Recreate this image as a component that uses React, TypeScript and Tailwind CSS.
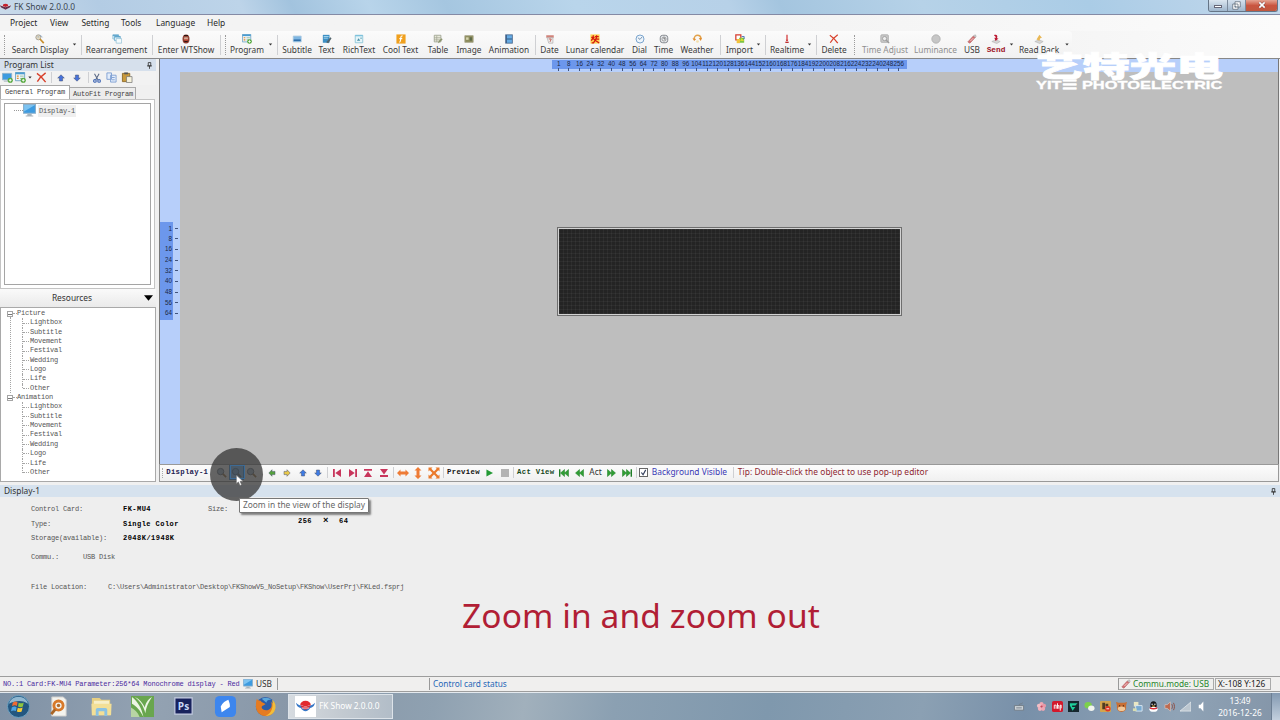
import React from "react";

type IconProps = { className?: string };

const Svg = ({
  children,
  className = "w-[10px] h-[10px]",
}: {
  children: React.ReactNode;
  className?: string;
}) => (
  <svg viewBox="0 0 12 12" className={`${className} shrink-0`} fill="none">
    {children}
  </svg>
);

/* ---------- toolbar icons ---------- */

const SearchIcon = () => (
  <Svg>
    <circle cx="4" cy="4" r="3" fill="#e3d9c0" stroke="#9d9a92" />
    <path d="M6 6l4.5 5" stroke="#c9902e" strokeWidth="2" />
    <path d="M3 3.5h2M6 1l3 3" stroke="#8aa6c4" />
  </Svg>
);
const WindowsIcon = () => (
  <Svg>
    <path d="M1 1h7v5H1z" fill="#d5ecf6" stroke="#76b4cf" strokeWidth=".8" />
    <path d="M3 3h7v5H3z" fill="#e4f4fa" stroke="#5ba3c8" strokeWidth=".8" />
    <path d="M5 5.500h6.500v5.500H5z" fill="#f4fbfd" stroke="#8bbbd0" strokeWidth=".8" />
    <path d="M1 1.500h7M3 3.500h7" stroke="#4a98c4" strokeWidth="1.200" />
  </Svg>
);
const MascotIcon = () => (
  <Svg>
    <ellipse cx="6" cy="6" rx="4.200" ry="5.500" fill="#8e3a2c" />
    <path d="M3.500 3.500h5v3h-5z" fill="#e8b39c" />
    <path d="M4 9h4M3.500 1.800h5" stroke="#2b1512" strokeWidth="1.300" />
    <path d="M4.200 4.500h1M6.800 4.500h1" stroke="#2b1512" />
    <path d="M4.500 7.300h3" stroke="#f04b36" />
  </Svg>
);
const ProgramIcon = ({ className }: IconProps) => (
  <Svg className={className}>
    <path d="M.5.500h10v9H.5z" fill="#eef4f7" stroke="#6ca2c4" />
    <path d="M.5 1.500h10" stroke="#4b9cd0" strokeWidth="2" />
    <path d="M2 4.500h2M2 7h2" stroke="#e28a2f" strokeWidth="1.400" />
    <path d="M5.500 4.500h4M5.500 7h3" stroke="#8eb9a0" />
    <circle cx="9" cy="9" r="2.800" fill="#54a83b" />
    <path d="M9 7.500v3M7.500 9h3" stroke="#fff" />
  </Svg>
);
const SubtitleIcon = () => (
  <Svg>
    <path d="M1.500 2.500h9.500v7H1.500z" fill="#7eb6e2" stroke="#a7c7df" />
    <path d="M2 6.500h8.500v2H2z" fill="#2f6fa9" />
  </Svg>
);
const TextIcon = () => (
  <Svg>
    <path d="M1 1h8v9.500H1z" fill="#3c8fc4" />
    <path d="M2 3h6M2 5h5" stroke="#b5dff2" />
    <path d="M5 10l5-6 1.500 1-4 6z" fill="#54656c" />
  </Svg>
);
const RichTextIcon = () => (
  <Svg>
    <path d="M1.500 1.500h9v9h-9z" fill="#e5f5f9" stroke="#86c3d6" />
    <path d="M1.500 2h9" stroke="#7cc1dd" strokeWidth="1.500" />
    <path d="M3.500 8l2-3 2 3z" fill="#4b8fa6" />
    <path d="M7.500 5h2" stroke="#4b8fa6" />
  </Svg>
);
const CoolTextIcon = () => (
  <Svg>
    <path d="M.5.500h11v11H.5z" fill="#f0a01e" />
    <path d="M8 2.500c-2-.7-2.200 1-2.400 3.500S5 10 3.800 9.500M4 5.500h3.500" stroke="#fff" strokeWidth="1.300" />
  </Svg>
);
const TableIcon = () => (
  <Svg>
    <path d="M1.500 1.500h8v8h-8z" fill="#e9eadb" stroke="#9ba08e" />
    <path d="M1.500 4.500h8M1.500 7h8M4.500 2v7.500" stroke="#9ba08e" strokeWidth=".8" />
    <path d="M6 11l1-3 3.500-3 1 1.500L8 10z" fill="#8a936d" />
  </Svg>
);
const ImageIcon = () => (
  <Svg>
    <path d="M1 2h10v8H1z" fill="#8c8b5b" stroke="#a7a68a" />
    <path d="M2.500 4h3v3h-3z" fill="#d6d6b0" />
    <path d="M7 4h2.500v4H7z" fill="#5c6a49" />
  </Svg>
);
const AnimationIcon = () => (
  <Svg>
    <path d="M1.500.500h9v11h-9z" fill="#3c5f89" />
    <path d="M3.500 1.500h6v9h-6z" fill="#66abe4" />
    <path d="M3.500 6h6" stroke="#25496e" />
  </Svg>
);
const DateIcon = () => (
  <Svg>
    <path d="M1.500 1.500h9v3h-9z" fill="#d08279" />
    <path d="M2.500 4.500h7v6.500h-5z" fill="#f0eeee" stroke="#aaa" strokeWidth=".8" />
    <path d="M4.500 6h3L6 9.500" stroke="#bb5046" />
  </Svg>
);
const LunarIcon = () => (
  <Svg>
    <path d="M.5.500h11v11H.5z" fill="#ffd34f" />
    <path
      d="M1.500 4h4M4 1.500L3.500 5 1.500 8M3.500 5L7 8M6 3h4.500M8 1.500L7.500 5.500M6 6h5M6.500 7L4 11M7 8l4 2.800M2 10.500h3"
      stroke="#d5180e"
      strokeWidth="1.500"
    />
  </Svg>
);
const DialIcon = () => (
  <Svg>
    <circle cx="6" cy="6" r="4.800" fill="#eef5fb" stroke="#7ba5ce" strokeWidth="1.200" />
    <path d="M3.500 4.500L6 6.500 8.500 3.500" stroke="#56779c" strokeWidth=".9" />
  </Svg>
);
const TimeIcon = () => (
  <Svg>
    <rect x="1.500" y="1.500" width="9" height="9" rx="3" fill="#e8ebee" stroke="#85898f" strokeWidth="1.200" />
    <circle cx="6" cy="6" r="2.500" stroke="#888" strokeWidth=".9" />
    <path d="M6 4v2h1.500" stroke="#555" strokeWidth=".9" />
  </Svg>
);
const WeatherIcon = () => (
  <Svg className="w-[11px] h-[10px]">
    <path d="M2 6c0-3 2-4.500 4-4.500S10 3 10 5.500" stroke="#e2a24b" strokeWidth="1.800" />
    <path d="M0 5l2 3.500 2.500-2.500zM7.500 5l4-.5-1.500 4z" fill="#e28e31" />
    <circle cx="6" cy="9" r="1.600" fill="#f4dfae" />
  </Svg>
);
const ImportIcon = () => (
  <Svg>
    <path d="M1 1h6v6H1z" fill="#fff" stroke="#d63c2f" strokeWidth="1.500" />
    <path d="M5 4.500h6v6H5z" fill="#7dc343" />
    <path d="M6 8l2-3 3 3.500z" fill="#e4de30" />
    <path d="M2 6h4v5H2z" fill="#f0c33d" />
    <path d="M8 3h3v3" stroke="#3965b3" />
  </Svg>
);
const RealtimeIcon = () => (
  <Svg>
    <path d="M6 1v7" stroke="#d0292a" strokeWidth="1.400" />
    <path d="M4 10h4" stroke="#bb2e2e" strokeWidth="1.600" />
    <path d="M4.500 7L6 9l1.500-2" fill="#d0292a" />
  </Svg>
);
const DeleteIcon = ({ className }: IconProps) => (
  <Svg className={className}>
    <path d="M1 1.500c4 2.500 7 6 9.500 9.500M10.500 1C7 3.500 3.500 7 1.500 10.500" stroke="#d8402b" strokeWidth="1.500" />
  </Svg>
);
const AdjustIcon = () => (
  <Svg>
    <rect x="1" y="1" width="9" height="9" rx="1" fill="#c9c9c9" stroke="#aaa" />
    <circle cx="5.500" cy="5.500" r="2.500" fill="#eee" stroke="#999" />
    <path d="M7.500 7.500l3.500 3.500" stroke="#999" strokeWidth="1.500" />
  </Svg>
);
const LuminanceIcon = () => (
  <Svg>
    <circle cx="6" cy="6" r="5" fill="#c6c6c6" stroke="#aeaeae" />
  </Svg>
);
const UsbIcon = () => (
  <Svg>
    <path d="M1 9.500L7.500 2.500l2.500 1.500-6.500 7z" fill="#d46d6f" stroke="#b5696a" strokeWidth=".8" />
    <path d="M8 2l2-1 1 2-1.500 1z" fill="#ddd" stroke="#999" strokeWidth=".7" />
    <path d="M4 8.500L7.500 5" stroke="#fff" strokeWidth=".8" />
  </Svg>
);
const SendIcon = () => (
  <Svg>
    <path d="M1 9l5-2 5 2-4 2.500z" fill="#d5d5d5" stroke="#aaa" strokeWidth=".6" />
    <path d="M3.500 1.500C6 0 9 2 7 5l2 .5-3.500 3L4 4.500l1.500.3C6 3.500 5 2.500 3.500 1.500z" fill="#bb1630" />
  </Svg>
);
const ReadIcon = () => (
  <Svg>
    <path d="M1 9l5-2 5 2-4 2.500z" fill="#d5d5d5" stroke="#aaa" strokeWidth=".6" />
    <path d="M3 6.500L6.500 1l3 3.500-2 .5-1 3z" fill="#e9b856" />
  </Svg>
);

const Sep = ({ className = "w-2" }: IconProps) => (
  <div className={`${className} h-5 flex justify-center shrink-0`}>
    <div className="w-px h-full bg-[#cfd0d3]" />
  </div>
);
const Grip = () => (
  <div className="w-px h-[20px] border-l border-dotted border-[#9b9b9b] shrink-0" />
);
const Caret = ({ className = "w-[5px]" }: IconProps) => (
  <svg viewBox="0 0 5 5" className={`${className} h-[5px] shrink-0`}>
    <path d="M.8 1.500h3.400L2.500 3.600z" fill="#333" />
  </svg>
);

const Tool = ({
  label,
  icon,
  w,
  text = "text-[#3a3a3a]",
}: {
  label: string;
  icon: React.ReactNode;
  w: string;
  text?: string;
}) => (
  <div className={`${w} shrink-0 h-full flex flex-col items-center pt-[3px]`}>
    {icon}
    <span className={`${text} leading-[12px] whitespace-nowrap`}>{label}</span>
  </div>
);

const MainToolbar = () => (
  <div className="h-[27px] w-[1072px] flex items-center bg-gradient-to-b from-[#fbfbfb] to-[#f1f1f1] rounded-r text-[8.3px]">
    <div className="w-[8px] pl-[4px] shrink-0">
      <Grip />
    </div>
    <Tool label="Search Display" icon={<SearchIcon />} w="w-[64px]" />
    <Caret />
    <Sep />
    <Tool label="Rearrangement" icon={<WindowsIcon />} w="w-[63px]" />
    <Sep className="w-[9px]" />
    <Tool label="Enter WTShow" icon={<MascotIcon />} w="w-[58px]" />
    <Sep className="w-[10px]" />
    <Grip />
    <Tool label="Program" icon={<ProgramIcon className="w-[10px] h-[10px]" />} w="w-[42px]" />
    <Caret />
    <Sep className="w-[9px]" />
    <Tool label="Subtitle" icon={<SubtitleIcon />} w="w-[30px]" />
    <Tool label="Text" icon={<TextIcon />} w="w-[29px]" />
    <Tool label="RichText" icon={<RichTextIcon />} w="w-[36px]" />
    <Tool label="Cool Text" icon={<CoolTextIcon />} w="w-[47px]" />
    <Tool label="Table" icon={<TableIcon />} w="w-[28px]" />
    <Tool label="Image" icon={<ImageIcon />} w="w-[34px]" />
    <Tool label="Animation" icon={<AnimationIcon />} w="w-[46px]" />
    <Sep className="w-[7px]" />
    <Tool label="Date" icon={<DateIcon />} w="w-[21px]" />
    <Tool label="Lunar calendar" icon={<LunarIcon />} w="w-[70px]" />
    <Tool label="Dial" icon={<DialIcon />} w="w-[19px]" />
    <Tool label="Time" icon={<TimeIcon />} w="w-[29px]" />
    <Tool label="Weather" icon={<WeatherIcon />} w="w-[38px]" />
    <Sep className="w-[9px]" />
    <Tool label="Import" icon={<ImportIcon />} w="w-[29px]" />
    <Caret className="w-[9px]" />
    <Sep className="w-[5px]" />
    <Tool label="Realtime" icon={<RealtimeIcon />} w="w-[38px]" />
    <Caret className="w-[7px]" />
    <Sep className="w-[7px]" />
    <Tool label="Delete" icon={<DeleteIcon className="w-[10px] h-[10px]" />} w="w-[28px]" />
    <div className="w-[12px] flex justify-center shrink-0">
      <Grip />
    </div>
    <Tool label="Time Adjust" icon={<AdjustIcon />} w="w-[50px]" text="text-[#8e8e8e]" />
    <Tool label="Luminance" icon={<LuminanceIcon />} w="w-[51px]" text="text-[#8e8e8e]" />
    <Tool label="USB" icon={<UsbIcon />} w="w-[22px]" />
    <Tool
      label="Send"
      icon={<SendIcon />}
      w="w-[26px]"
      text="text-[#9c1024] font-bold font-['Liberation_Mono'] text-[7.8px]"
    />
    <Caret />
    <Tool label="Read Back" icon={<ReadIcon />} w="w-[50px]" />
    <Caret className="w-[6px]" />
  </div>
);

/* ---------- left side ---------- */

const PinIcon = () => (
  <svg viewBox="0 0 6 8" className="w-[5px] h-[7px]" fill="none" stroke="#333">
    <path d="M1.500.500h3v4h-3zM0 4.500h6M3 4.500v3.500" />
  </svg>
);

const ScreenIcon = ({ className }: IconProps) => (
  <Svg className={className}>
    <path d="M.5.500h11v8H.5z" fill="#3d9be0" stroke="#8ab0cc" />
    <path d="M1 1h10L1 7z" fill="#7dc3f1" />
    <path d="M4 9h4v1.500h1.500v1h-7v-1H4z" fill="#a9b4bb" />
  </Svg>
);

const Arrow = ({ turn = "", color }: { turn?: string; color: string }) => (
  <svg viewBox="0 0 8 8" className={`w-[8px] h-[8px] shrink-0 ${turn}`}>
    <path d="M4 .8l3.300 3.200H5.600v3H2.400V4H.7z" fill={color} stroke="#47506b" strokeWidth=".5" />
  </svg>
);

const ListToolbar = () => (
  <div className="h-[14px] flex items-center pl-[2px] pb-px bg-[#f2f2f2]">
    <div className="w-[13px]">
      <Svg className="w-[11px] h-[11px]">
        <path d="M.5 1.500h10v7H.5z" fill="#3d9be0" stroke="#8ab0cc" />
        <path d="M2 10h6" stroke="#a5b1ba" />
        <circle cx="9" cy="9" r="2.800" fill="#54a83b" />
        <path d="M9 7.500v3M7.500 9h3" stroke="#fff" />
      </Svg>
    </div>
    <ProgramIcon className="w-[11px] h-[11px]" />
    <Caret className="w-[8px]" />
    <DeleteIcon className="w-[11px] h-[11px] ml-[2px]" />
    <Sep className="w-[5px] ml-[2px] max-h-[11px]" />
    <div className="flex gap-[8px] ml-[3px]">
      <Arrow color="#4772db" />
      <Arrow color="#4772db" turn="rotate-180" />
    </div>
    <Sep className="w-[6px] ml-[4px] max-h-[11px]" />
    <Svg className="w-[10px] h-[10px] ml-px">
      <path d="M3 1l4 7M8.500 1l-4 7" stroke="#5b6a86" strokeWidth="1.300" />
      <circle cx="3.500" cy="9.500" r="1.600" stroke="#3f66b3" strokeWidth="1.300" />
      <circle cx="8.500" cy="9.500" r="1.600" stroke="#3f66b3" strokeWidth="1.300" />
    </Svg>
    <Svg className="w-[11px] h-[11px] ml-[4px]">
      <path d="M1 1h5v7H1zM5 3.500h6v7.500H5z" fill="#e3edfb" stroke="#7fa0d2" />
      <path d="M6.500 6h3M6.500 8.500h3" stroke="#7fa0d2" />
    </Svg>
    <Svg className="w-[12px] h-[11px] ml-[4px]">
      <path d="M1 1.500h8v9H1z" fill="#c99a3c" stroke="#8c6b2b" />
      <path d="M3 .5h4v2H3z" fill="#555" />
      <path d="M5.500 5h6v6.500h-6z" fill="#f6f2dc" stroke="#777" strokeWidth=".8" />
    </Svg>
  </div>
);

const RESOURCES = [
  "Lightbox",
  "Subtitle",
  "Movement",
  "Festival",
  "Wedding",
  "Logo",
  "Life",
  "Other",
];

const ResourceGroup = ({ name, last = false }: { name: string; last?: boolean }) => (
  <div className="flex">
    <div className="w-[6px] flex flex-col items-center shrink-0">
      <div className="mt-[2px] w-[6px] h-[6px] border border-[#a5a5a5] bg-white flex items-center">
        <div className="w-full h-px bg-[#777]" />
      </div>
      {!last && <div className="flex-1 border-l border-dotted border-[#a5a5a5]" />}
    </div>
    <div>
      <div className="h-[9.350px] leading-[9.350px] flex items-center">
        <div className="w-[4px] border-t border-dotted border-[#a5a5a5]" />
        {name}
      </div>
      {RESOURCES.map((item, index) => (
        <div key={item} className="h-[9.350px] leading-[9.350px] flex items-center pl-[9px]">
          <div className="h-full w-px">
            <div
              className={`${index === 7 ? "h-1/2" : "h-full"} border-l border-dotted border-[#a5a5a5]`}
            />
          </div>
          <div className="w-[6px] mr-px border-t border-dotted border-[#a5a5a5]" />
          {item}
        </div>
      ))}
    </div>
  </div>
);

const SidePanel = () => (
  <div className="w-[156px] shrink-0 flex flex-col">
    <div className="h-[12px] bg-[#d6e0ec] flex items-center justify-between pl-[4px] pr-[4px] text-[8.300px] text-[#333]">
      <span>Program List</span>
      <PinIcon />
    </div>
    <ListToolbar />
    <div className="h-[14px] flex items-end font-['Liberation_Mono','DejaVu_Sans_Mono',monospace] text-[7px] tracking-[-0.200px] text-[#444]">
      <div className="h-[14px] w-[70px] bg-white border border-b-0 border-[#a9a9a9] pl-[4px] leading-[12px] whitespace-nowrap">
        General Program
      </div>
      <div className="h-[12px] w-[66px] bg-[#ececec] border border-l-0 border-b-0 border-[#a9a9a9] pl-[3px] leading-[12px] whitespace-nowrap">
        AutoFit Program
      </div>
    </div>
    <div className="h-[190px] w-[155px] bg-white border border-[#c4c4c4] p-[3px]">
      <div className="h-full border border-[#a5a5a5] pl-[9px] flex items-start font-['Liberation_Mono',monospace] text-[7px] tracking-[-0.200px] text-[#555]">
        <div className="w-[9px] mt-[6px] border-t border-dotted border-[#999]" />
        <ScreenIcon className="w-[13px] h-[13px]" />
        <span className="ml-[2px] mt-px px-[1px] bg-[#efefef] leading-[12px]">Display-1</span>
      </div>
    </div>
    <div className="h-[18px] flex items-center bg-gradient-to-b from-[#fafafa] to-[#eaeaea] text-[8.400px] text-[#333]">
      <span className="flex-1 text-center pt-px">Resources</span>
      <svg viewBox="0 0 10 6" className="w-[9px] h-[6px] mr-[3px]">
        <path d="M0 0h10L5 6z" fill="#000" />
      </svg>
    </div>
    <div className="h-[175px] bg-white border border-[#a9a9a9] pl-[6px] pt-px font-['Liberation_Mono',monospace] text-[7px] tracking-[-0.200px] text-[#555]">
      <ResourceGroup name="Picture" />
      <ResourceGroup name="Animation" last />
    </div>
  </div>
);

/* ---------- canvas ---------- */

const COLS = Array.from({ length: 33 }, (_, i) => (i === 0 ? 1 : i * 8));
const ROWS = [1, 8, 16, 24, 32, 40, 48, 56, 64];

const Canvas = () => (
  <div className="h-[405px] flex flex-col bg-[#bebebe] border-l border-r border-[#777] font-['Liberation_Sans',sans-serif] text-[6.300px] text-[#1b2742]">
    <div className="h-[13px] shrink-0 bg-[#b7cffa] pl-[392px] pt-px">
      <div className="w-[355px] h-[9px] bg-[#6c97ec] flex pl-[2px]">
        {COLS.map((n) => (
          <div
            key={n}
            className={`${n === 1 ? "w-[9.500px]" : "w-[10.650px]"} shrink-0 flex flex-col items-center`}
          >
            <span className="leading-[8px] h-[8px]">{n}</span>
            <div className="w-px h-[3px] bg-[#41547d] shrink-0" />
          </div>
        ))}
      </div>
    </div>
    <div className="flex-1 flex">
      <div className="w-[19.500px] bg-[#b7cffa] pt-[150px] shrink-0">
        <div className="w-[13px] h-[98px] bg-[#6c97ec] pt-[2px]">
          {ROWS.map((n) => (
            <div
              key={n}
              className={`${n === 1 ? "h-[9.500px]" : "h-[10.650px]"} w-[18px] flex items-center`}
            >
              <span className="w-[12px] text-right leading-[8px]">{n}</span>
              <div className="ml-[3px] w-[3px] h-px bg-[#41547d]" />
            </div>
          ))}
        </div>
      </div>
      <div className="pl-[377.500px] pt-[155px]">
        <div className="w-[345px] h-[89px] border border-[#6e6e6e] bg-[#d2d2d2] p-px">
          <div className="w-full h-full bg-[#242424] bg-[linear-gradient(#ffffff0b_1px,transparent_1px),linear-gradient(90deg,#ffffff0b_1px,transparent_1px)] bg-[size:4px_4px]" />
        </div>
      </div>
    </div>
  </div>
);

const Magnifier = () => (
  <Svg className="w-[11px] h-[11px]">
    <circle cx="5" cy="5" r="3.500" fill="#a8bccd" stroke="#6a7580" />
    <path d="M7.500 7.500l3.500 3.500" stroke="#9b7a49" strokeWidth="1.800" />
  </Svg>
);

const Align = ({ turn = "" }: { turn?: string }) => (
  <svg viewBox="0 0 8 8" className={`w-[8px] h-[8px] ${turn}`}>
    <path d="M0 0h1.800v8H0zM8 0v8L2.300 4z" fill="#c8365c" />
  </svg>
);

const Spread = ({ turn = "" }: { turn?: string }) => (
  <svg viewBox="0 0 12 8" className={`w-[12px] h-[8px] ${turn}`}>
    <path d="M0 4l3.500-3.500v2h5v-2L12 4 8.500 7.500v-2h-5v2z" fill="#ee7b35" />
  </svg>
);

const Skip = ({ turn = "", bar = false }: { turn?: string; bar?: boolean }) => (
  <svg viewBox="0 0 10 8" className={`w-[10px] h-[8px] ${turn}`}>
    <path d="M1.500 4L5.500.500v7zM5.500 4L9.500.500v7z" fill="#2f9e33" stroke="#1f7d27" strokeWidth=".5" />
    {bar && <path d="M0 .3h1.400v7.400H0z" fill="#1f7d27" />}
  </svg>
);

const Cell = ({ children, w = "w-[15.400px]" }: { children: React.ReactNode; w?: string }) => (
  <div className={`${w} h-full shrink-0 flex items-center justify-center`}>{children}</div>
);

const ViewToolbar = () => (
  <div className="relative h-[18px] flex items-center pb-px border border-[#999] bg-gradient-to-b from-[#fcfcfc] to-[#f0f0f0] text-[8.400px] text-[#333]">
    <div className="w-[6px] h-[10px] pl-[2px] shrink-0">
      <div className="h-full border-l border-dotted border-[#aaa]" />
    </div>
    <Cell w="w-[42.500px]">
      <span className="font-['Liberation_Mono'] font-bold text-[7.300px] tracking-[0.280px] text-[#1e2152]">
        Display-1
      </span>
    </Cell>
    <div className="w-[5px] shrink-0" />
    <Cell>
      <Magnifier />
    </Cell>
    <Cell>
      <div className="w-[15px] h-[15px] flex items-center justify-center border border-[#4f9ae0] bg-[#b9d9f5]">
        <Magnifier />
      </div>
    </Cell>
    <Cell>
      <Magnifier />
    </Cell>
    <div className="w-[4.500px] shrink-0" />
    <Cell>
      <Arrow color="#55a03d" turn="-rotate-90" />
    </Cell>
    <Cell>
      <Arrow color="#e9c84a" turn="rotate-90" />
    </Cell>
    <Cell>
      <Arrow color="#3e7be4" />
    </Cell>
    <Cell>
      <Arrow color="#3e7be4" turn="rotate-180" />
    </Cell>
    <Sep className="w-[4px] max-h-[11px]" />
    <Cell>
      <Align />
    </Cell>
    <Cell>
      <Align turn="rotate-180" />
    </Cell>
    <Cell>
      <Align turn="rotate-90" />
    </Cell>
    <Cell>
      <div className="border-b-2 border-[#c8365c] w-[8px] h-[8px] flex items-start justify-center">
        <svg viewBox="0 0 8 6" className="w-[8px] h-[6px]">
          <path d="M0 0h8L4 5.500z" fill="#c8365c" />
        </svg>
      </div>
    </Cell>
    <Sep className="w-[4px] max-h-[11px]" />
    <Cell>
      <Spread />
    </Cell>
    <Cell>
      <Spread turn="rotate-90" />
    </Cell>
    <Cell>
      <Svg className="w-[12px] h-[12px]">
        <path
          d="M.5.500h4L3.300 1.700 6 4.400l2.700-2.700L7.500.500h4v4l-1.200-1.200L7.600 6l2.700 2.700 1.200-1.200v4h-4l1.200-1.200L6 7.600l-2.700 2.700 1.200 1.200h-4v-4l1.200 1.200L4.400 6 1.700 3.300.500 4.500z"
          fill="#ea7a2c"
        />
      </Svg>
    </Cell>
    <Sep className="w-[4px] max-h-[11px]" />
    <Cell w="w-[36px]">
      <span className="font-['Liberation_Mono'] font-bold text-[7.300px] tracking-[0.300px] text-[#111]">
        Preview
      </span>
    </Cell>
    <Cell>
      <svg viewBox="0 0 8 8" className="w-[7px] h-[8px]">
        <path d="M.5 0L8 4 .5 8z" fill="#239a35" />
      </svg>
    </Cell>
    <Cell>
      <div className="w-[8px] h-[8px] bg-[#b3b3b3]" />
    </Cell>
    <Sep className="w-[3px] max-h-[11px]" />
    <Cell w="w-[41px]">
      <span className="font-['Liberation_Mono'] font-bold text-[7.300px] tracking-[0.300px] text-[#15471b] whitespace-nowrap">
        Act View
      </span>
    </Cell>
    <Cell>
      <Skip bar />
    </Cell>
    <Cell>
      <Skip />
    </Cell>
    <Cell w="w-[17px]">Act</Cell>
    <Cell>
      <Skip turn="rotate-180" />
    </Cell>
    <Cell>
      <Skip turn="rotate-180" bar />
    </Cell>
    <Sep className="w-[4px] max-h-[11px]" />
    <div className="w-[9px] h-[9px] border border-[#666] bg-white flex items-center justify-center shrink-0">
      <svg viewBox="0 0 8 8" className="w-[7px] h-[7px]" fill="none">
        <path d="M1.500 4l2 2.500L6.500 1" stroke="#333e5c" strokeWidth="1.300" />
      </svg>
    </div>
    <span className="w-[83px] pl-[4px] pb-px text-[#3a38b5] whitespace-nowrap shrink-0">Background Visible</span>
    <Sep className="w-[5px] max-h-[11px]" />
    <span className="pl-[2px] text-[#8d2631] tracking-[0.040px] whitespace-nowrap">
      Tip: Double-click the object to use pop-up editor
    </span>

    {/* click highlight, pointer and tooltip */}
    <div className="absolute left-[50px] top-[-17px] w-[53px] h-[53px] rounded-full bg-[#383838c4]" />
    <div className="absolute left-[70px] top-0 w-[15px] h-[14px] border border-[#3d6a94] bg-[#29507333]" />
    <svg viewBox="0 0 10 14" className="absolute left-[76px] top-[9px] w-[8px] h-[13px]">
      <path d="M.5.500v10.500l2.500-2.300 2 4.500 2-.9-2-4.300h3.800z" fill="#fff" stroke="#666" strokeWidth=".6" />
    </svg>
    <div className="absolute left-[79px] top-[33px] w-[130px] h-[15px] z-10 border border-[#777] rounded-[1px] bg-white shadow-[2px_2px_2px_#0007] text-center text-[8.400px] leading-[12px] text-[#666] whitespace-nowrap">
      Zoom in the view of the display
    </div>
  </div>
);

/* ---------- bottom ---------- */

const InfoPanel = () => (
  <div className="h-[179px] bg-[#eeeeee] pl-[31px] pt-[6px] font-['Liberation_Mono',monospace] text-[7px] tracking-[-0.200px] text-[#555] whitespace-pre">
    <div className="flex h-[12px] leading-[12px]">
      <span className="w-[92px]">Control Card:</span>
      <b className="w-[85px] text-black tracking-[0.460px]">FK-MU4</b>
      <span>Size:</span>
    </div>
    <div className="flex h-[17px] leading-[17px]">
      <span className="w-[92px] pt-[1px]">Type:</span>
      <b className="w-[175px] pt-[1px] text-black tracking-[0.460px]">Single Color</b>
      <b className="w-[25px] text-black tracking-[0.460px] leading-[13px]">256</b>
      <b className="w-[16px] text-black leading-[13px] text-[9px]">×</b>
      <b className="text-black tracking-[0.460px] leading-[13px]">64</b>
    </div>
    <div className="flex h-[12px] leading-[12px]">
      <span className="w-[92px]">Storage(available):</span>
      <b className="text-black tracking-[0.480px]">2048K/1948K</b>
    </div>
    <div className="flex h-[12px] leading-[12px] mt-[7px]">
      <span className="w-[52px]">Commu.:</span>
      <span>USB Disk</span>
    </div>
    <div className="flex h-[12px] leading-[13px] mt-[18px]">
      <span className="w-[77px]">File Location:</span>
      <span>{"C:\\Users\\Administrator\\Desktop\\FKShowV5_NoSetup\\FKShow\\UserPrj\\FKLed.fsprj"}</span>
    </div>
    <div className="pl-[431px] pt-[1px] font-['Noto_Sans',sans-serif] text-[33.500px] leading-[42px] tracking-[0.100px] text-[#b11e35]">
      Zoom in and zoom out
    </div>
  </div>
);

const StatusBar = () => (
  <div className="h-[16px] flex items-center bg-[#f0efee] border-y border-[#9d9d9d] text-[8.300px] whitespace-nowrap">
    <span className="w-[242px] pl-[3px] shrink-0 font-['Liberation_Mono'] text-[7px] tracking-[-0.190px] text-[#4a2aa0]">
      NO.:1 Card:FK-MU4 Parameter:256*64 Monochrome display - Red
    </span>
    <div className="w-[36px] h-[12px] shrink-0 border-r border-[#999] flex items-center gap-[3px] pl-px text-[#333]">
      <ScreenIcon className="w-[10px] h-[10px]" />
      USB
    </div>
    <div className="w-[152px] h-[12px] border-r border-[#999] shrink-0" />
    <span className="w-[689px] h-[12px] leading-[12px] pl-[3px] shrink-0 border-r border-[#999] text-[#2767b8]">
      Control card status
    </span>
    <div className="w-[95px] h-[12px] shrink-0 border border-l-0 border-[#aaa] flex items-center pl-[2px] gap-[2px] text-[#26862c]">
      <UsbIcon />
      Commu.mode: USB
    </div>
    <span className="w-[56px] h-[12px] leading-[10px] shrink-0 border border-[#aaa] ml-px pl-[2px] text-[#222]">
      X:-108 Y:126
    </span>
  </div>
);

const AppIcon = ({ children, w }: { children: React.ReactNode; w: string }) => (
  <div className={`${w} shrink-0 flex justify-center`}>
    <svg viewBox="0 0 24 24" className="w-[23px] h-[23px]" fill="none">
      {children}
    </svg>
  </div>
);

const LogoMark = ({ className }: IconProps) => (
  <svg viewBox="0 0 20 20" className={className}>
    <path d="M0 0h20v20H0z" fill="#fff" />
    <path d="M5 8.500a5 4 0 0 1 10 0l-5 1.500z" fill="#e22a2e" />
    <path d="M1 6.500c1.500 2 4 2.500 6 3l3 1.500 3-1.500c2-.5 4.500-1 6-3-.5 3.500-2.500 4.500-4.500 5-1.500 2-2.500 3-4.500 3s-3-1-4.500-3c-2-.5-4-1.500-4.500-5z" fill="#3778c8" />
    <path d="M5 8.800l5 1.400 5-1.400-2 3.200-3 1.200L7 12z" fill="#d92a33" />
    <path d="M6.500 11.500h7" stroke="#fff" strokeWidth=".7" />
  </svg>
);

const Tray = ({ children }: { children: React.ReactNode }) => (
  <div className="w-[16px] flex justify-center">
    <Svg className="w-[11px] h-[11px]">{children}</Svg>
  </div>
);

const Taskbar = () => (
  <div className="h-[28px] border-t border-[#e4e9ee] bg-[linear-gradient(100deg,#7f91a5_0%,#93a2b2_12%,#8796a7_24%,#8fa1b1_34%,#a1b0bc_41%,#8ba0b2_48%,#7f98ad_60%,#8ba0b3_72%,#7890a9_80%,#8fa3b6_92%,#8495a8_100%)] flex items-center font-['Noto_Sans'] text-[8.300px] text-white">
    <AppIcon w="w-[36px]">
      <circle cx="12" cy="12" r="11.500" fill="#235780" stroke="#6fa4c4" />
      <path d="M2 9a10.500 10.500 0 0 1 20 0C15 5 9 6 2 9z" fill="#91b8d0" />
      <path d="M6 8c2-1.500 3.500-1.500 5-.5l-.7 4c-1.500-1-3-1-5 .300z" fill="#ef6b31" />
      <path d="M12.200 8c2 1 3.500 1 5.300-.200l-1 4.200c-1.500 1-3 1-5 0z" fill="#8dc63f" />
      <path d="M5 13c2-1.300 3.500-1.200 5-.2l-.8 4c-1.500-1-3-1-5 .2z" fill="#4ba4e4" />
      <path d="M11.300 13.200c2 1 3.400 1 5-.1l-1 4c-1.500 1-3 1-5 0z" fill="#f9cb35" />
    </AppIcon>
    <AppIcon w="w-[44px]">
      <path d="M5 2h12l3 3v17H5z" fill="#f3f3ee" stroke="#c9c9c9" />
      <circle cx="12" cy="11" r="4.800" stroke="#d8792a" strokeWidth="3" />
      <circle cx="12" cy="11" r="1.800" fill="#b06c30" />
      <path d="M8.500 15l-4 5" stroke="#a96526" strokeWidth="3" />
    </AppIcon>
    <AppIcon w="w-[42px]">
      <path d="M2 3h8l2 2h9v16H2z" fill="#e7cf82" />
      <path d="M4 6h16v4H4z" fill="#f7efc8" />
      <path d="M1.500 9h21L22 21H2z" fill="#f3df96" />
      <path d="M6 22v-6.500q0-2 2-2h8q2 0 2 2V22h-3v-5H9v5z" fill="#8bc2e2" />
    </AppIcon>
    <AppIcon w="w-[40px]">
      <path d="M0 1h24v22H0z" fill="#69a64e" />
      <path d="M1 2c6 5 10 11 12 21-4-8-7-11-12-14zM4 2c6 5 9 9 11 17 1-7 3-11 7-17-5 3-7 7-7.500 11C12 8 9 4 4 2z" fill="#edf5e4" />
      <path d="M0 13c4 2 7 5 9 10H0z" fill="#b8d5a4" />
    </AppIcon>
    <AppIcon w="w-[43px]">
      <path d="M3 3h18v17H3z" fill="#18225d" stroke="#c7cfe4" strokeWidth="1.200" />
      <text x="12" y="15.500" textAnchor="middle" fontSize="10.500" fontWeight="bold" fontFamily="Open Sans" fill="#c9d7f7">
        Ps
      </text>
    </AppIcon>
    <AppIcon w="w-[40px]">
      <rect x="1" y="1" width="22" height="22" rx="5" fill="#3d86ee" />
      <path d="M8 18l-1-6c2-4 5-6 8-7 1 3 2 5 1.500 7.500z" fill="#fff" />
    </AppIcon>
    <AppIcon w="w-[41px]">
      <circle cx="12" cy="12" r="10" fill="#2c5ca8" />
      <path d="M8 4c4-2 8-1 10 1-3-.5-5 1-5 3z" fill="#5ca7da" />
      <path d="M3 4c1 1.500 2 2 4 2 1 2 3 2 5 3.500-1 1.500-4 1.500-4 3.500 1 3.500 7 4 9.500.500 1.500-2 1-5 0-6.500 3 2 4.500 4 4 7.500C20.500 20 16 22.500 11.500 22 5 21.500 1.500 16 2 11c.1-2 .2-5 1-7z" fill="#e57b22" />
      <path d="M19 5c4 3 4.500 9 2 12.500-2 3-6 4.500-9 4.500 6-3 8.500-8 7-17z" fill="#f3bd38" />
    </AppIcon>
    <div className="w-[105px] h-[25px] ml-[2px] border border-[#dde3e9] bg-gradient-to-r from-[#d6dbe0] via-[#c3cad1] to-[#b2bdc8] flex items-center pl-[6px] gap-[3px] shrink-0">
      <LogoMark className="w-[21px] h-[21px]" />
      <span className="whitespace-nowrap">FK Show 2.0.0.0</span>
    </div>

    <div className="flex-1" />
    <div className="flex items-center shrink-0">
      <div className="w-[20px] flex">
        <Svg className="w-[12px] h-[11px]">
          <path d="M1 5h10v5H1z" fill="#cdd3d8" stroke="#727c85" />
          <path d="M6 5c0-3 3-1 4-3M3 7.500h6" stroke="#727c85" />
        </Svg>
      </div>
      <Tray>
        <circle cx="6" cy="3.300" r="2.300" fill="#f0a8b4" />
        <circle cx="3.300" cy="5.300" r="2.300" fill="#f3bec6" />
        <circle cx="8.700" cy="5.300" r="2.300" fill="#e898a6" />
        <circle cx="4.300" cy="8.500" r="2.300" fill="#f3b2bd" />
        <circle cx="7.700" cy="8.500" r="2.300" fill="#efa6b3" />
        <circle cx="6" cy="6" r="1.200" fill="#cb4358" />
      </Tray>
      <Tray>
        <rect x="0" y="0" width="12" height="12" rx="2" fill="#d3182c" />
        <path d="M2.500 8.500V4.500h2v4M6 2.500v6M6 5h1.500v3.500M9 10.500v-6h1v3.500" stroke="#fff" />
      </Tray>
      <Tray>
        <path d="M0 0h12v12H0z" fill="#16272e" />
        <path d="M2 2.500h8.500L8 5H4.500v1.500H8L5 10.500 2 5z" fill="#1fcf9b" />
      </Tray>
      <Tray>
        <ellipse cx="4.500" cy="4.500" rx="4" ry="3.500" fill="#7cd04c" />
        <ellipse cx="8" cy="8" rx="3.500" ry="3" fill="#f0f3ee" />
      </Tray>
      <Tray>
        <rect x="0" y="0" width="12" height="12" rx="1" fill="#d3a54d" />
        <path d="M2.500 2h3v7h-3zM6 3h3v3H6z" fill="#503b22" />
        <circle cx="8.500" cy="8.500" r="3" fill="#dc3727" />
        <path d="M7 8.500h3" stroke="#fff" />
      </Tray>
      <Tray>
        <path d="M0 1l3 1h6l3-1-1 4v3c0 2-2 4-5 4S1 10 1 8V5z" fill="#c86f34" />
        <ellipse cx="6" cy="8.500" rx="4" ry="2.500" fill="#f1c797" />
        <path d="M4 4.500v1.500M8 4.500v1.500" stroke="#402010" />
      </Tray>
      <Tray>
        <path d="M2 1h5v5H2z" fill="#eae7c4" />
        <path d="M4 5h7v6H4z" fill="#77aad2" stroke="#dbe8f2" />
        <path d="M1 8h4v3H1z" fill="#d8ddb1" />
      </Tray>
      <Tray>
        <ellipse cx="6" cy="4.500" rx="3.500" ry="4.300" fill="#16181c" />
        <ellipse cx="6" cy="9" rx="4.500" ry="2.800" fill="#fff" />
        <path d="M2 6.500c2 1.500 6 1.500 8 0v2c-2 1-6 1-8 0z" fill="#da2c37" />
        <path d="M4.500 3v1M7.500 3v1" stroke="#fff" strokeWidth="1.500" />
        <path d="M4.500 5.500h3" stroke="#f3b22d" />
      </Tray>
      <Tray>
        <path d="M1 4h2.500L7 1v10L3.500 8H1z" fill="#bd6a50" stroke="#e6d5ce" strokeWidth=".6" />
        <path d="M8.500 3.500c1 1.500 1 3.500 0 5M10.300 2c1.500 2.500 1.500 5.500 0 8" stroke="#8e4c41" />
      </Tray>
      <Tray>
        <path d="M0 11L12 1v10z" fill="#bcc7d0" stroke="#e8edf0" strokeWidth=".8" />
      </Tray>
      <Tray>
        <path d="M3 4h2l3-3.500v11L5 8H3z" fill="#fff" />
      </Tray>
    </div>
    <div className="w-[62px] flex flex-col items-center leading-[12px] shrink-0 whitespace-nowrap">
      <span>13:49</span>
      <span>2016-12-26</span>
    </div>
    <div className="w-[9px] h-full border-l border-[#6c7f94] bg-gradient-to-b from-[#8399b1] to-[#c3d0de] shrink-0" />
  </div>
);

const TitleBar = () => (
  <div className="h-[15px] flex items-center justify-between border-b border-[#848aa5] bg-[linear-gradient(65deg,#c9daea_0%,#b3cce4_8%,#bdd4e9_19%,#a2c3de_23%,#b8d4ea_29%,#a5c6e0_35%,#b9d5eb_45%,#b7d1e8_57%,#a4c5df_61%,#b6d2e8_72%,#aacce6_85%,#c3d8ec_100%)] text-[8.400px] text-[#3b4652]">
    <div className="flex items-center">
      <svg viewBox="0 3 20 14" className="w-[11px] h-[8px]">
        <path d="M0 6l5 1 5-3 5 3 5-1-2 5-4 1-4 4-4-4-4-1z" fill="#f4f1f3" />
        <path d="M5 8a5 4 0 0 1 10 0l-5 2z" fill="#c5202c" />
        <path d="M0 7l6 2 4 1.500L14 9l6-2c-1 4-3 5-6 5.500l-4 2.500-4-2.500C3 12 1 11 0 7z" fill="#64324e" />
      </svg>
      <span className="ml-[3px]">FK Show 2.0.0.0</span>
    </div>
    <div className="h-[12px] mb-[3px] mr-[2px] flex border border-t-0 border-[#657587] rounded-b-[3px] overflow-hidden">
      <div className="w-[19px] bg-gradient-to-b from-[#dbe6f0] to-[#9fb6cd] border-r border-[#7b8a9c] flex items-end justify-center pb-[3px]">
        <div className="w-[8px] h-[3px] bg-white border border-[#667]" />
      </div>
      <div className="w-[18px] bg-gradient-to-b from-[#d5e1ed] to-[#9fb6cd] border-r border-[#7b8a9c] flex items-center justify-center">
        <Svg className="w-[9px] h-[9px]">
          <path d="M4 1h7v7H4zM1 4h7v7H1z" fill="#fff" stroke="#5c6877" />
          <path d="M3.500 6.500h2v2h-2z" fill="#6e8296" />
        </Svg>
      </div>
      <div className="w-[31px] bg-gradient-to-b from-[#e4a493] via-[#c95540] to-[#c1583f] flex items-center justify-center">
        <Svg className="w-[8px] h-[8px]">
          <path d="M2 2l8 8M10 2l-8 8" stroke="#704044" strokeWidth="3.800" />
          <path d="M2 2l8 8M10 2l-8 8" stroke="#fff" strokeWidth="2.500" />
        </Svg>
      </div>
    </div>
  </div>
);

const MenuBar = () => (
  <div className="h-[16px] flex items-center pl-[10px] text-[8.400px] text-[#2a2a2a] bg-gradient-to-r from-[#f3f3f3] from-60% to-[#fbfbfb]">
    <span className="w-[40px]">Project</span>
    <span className="w-[31.500px]">View</span>
    <span className="w-[39.500px]">Setting</span>
    <span className="w-[35px]">Tools</span>
    <span className="w-[51px]">Language</span>
    <span>Help</span>
  </div>
);

const Watermark = () => (
  <div className="absolute left-[1036px] top-[52px] w-[187px] text-white font-bold whitespace-nowrap">
    <div className="h-[28px] leading-[27px] text-[28px] font-black font-['Noto_Sans_CJK_SC',sans-serif] origin-left scale-x-[1.670] [-webkit-text-stroke:0.800px_white]">
      艺特光电
    </div>
    <div className="h-[10px] leading-[11px] text-[11.500px] font-['Liberation_Sans',sans-serif] origin-left scale-x-[1.430] [-webkit-text-stroke:0.300px_white]">
      YIT☰ PHOTOELECTRIC
    </div>
  </div>
);

const App = () => {
  return (
    <div className="relative w-[1280px] h-[720px] overflow-hidden flex flex-col bg-[#f0f0f0] font-['Noto_Sans','Noto_Sans_CJK_SC',sans-serif]">
      <TitleBar />
      <MenuBar />
      <div className="bg-gradient-to-r from-[#f4f4f4] from-80% to-[#fbfbfb]">
        <MainToolbar />
      </div>
      <div className="h-[424px] flex border-t border-[#888]">
        <SidePanel />
        <div className="flex-1 ml-[3px] mr-px">
          <Canvas />
          <ViewToolbar />
        </div>
      </div>
      <div className="h-[3px]" />
      <div className="h-[12px] bg-[#d6e2ee] flex items-center justify-between pl-[4px] pr-[4px] pt-px text-[8.400px] text-[#333]">
        <span>Display-1</span>
        <PinIcon />
      </div>
      <InfoPanel />
      <StatusBar />
      <Taskbar />
      <Watermark />
    </div>
  );
};

export default App;
